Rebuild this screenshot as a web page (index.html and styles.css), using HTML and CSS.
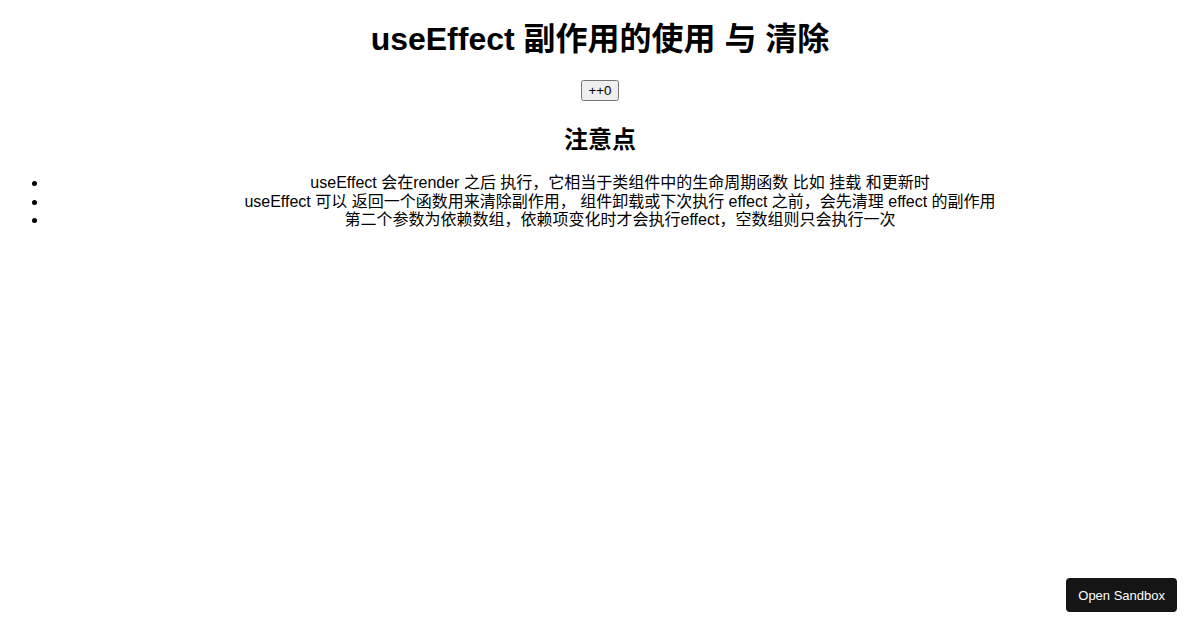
FILE: index.html
```html
<!DOCTYPE html>
<html lang="zh-CN">
<head>
<meta charset="utf-8">
<title>useEffect</title>
<link rel="stylesheet" href="styles.css">
</head>
<body>
<div class="app">
  <h1 class="title">useEffect 副作用的使用 与 清除</h1>
  <button class="counter" type="button">++0</button>
  <h2 class="subtitle">注意点</h2>
  <ul class="notes">
    <li class="note">useEffect 会在render 之后 执行，它相当于类组件中的生命周期函数 比如 挂载 和更新时</li>
    <li class="note">useEffect 可以 返回一个函数用来清除副作用， 组件卸载或下次执行 effect 之前，会先清理 effect 的副作用</li>
    <li class="note">第二个参数为依赖数组，依赖项变化时才会执行effect，空数组则只会执行一次</li>
  </ul>
</div>
<a class="open-sandbox" href="#">Open Sandbox</a>
</body>
</html>
```

FILE: styles.css
```css
body {
  margin: 0;
  padding: 0 8px;
  background: #ffffff;
  color: #000000;
}

.app {
  font-family: "Liberation Sans", Arial, "Noto Sans CJK SC", sans-serif;
  text-align: center;
  line-height: 1.15;
}

.title {
  font-size: 32px;
  line-height: 36.8px;
  height: 36.8px;
  margin: 21.44px 0;
}

.counter {
  font-family: "Liberation Sans", Arial, sans-serif;
  font-size: 13.333px;
  line-height: 15.3px;
  height: 21.5px;
  vertical-align: top;
}

.subtitle {
  font-size: 24px;
  line-height: 27.6px;
  height: 27.6px;
  margin: 25px 0 20.5px;
}

.notes {
  margin: 16px 0;
  padding-left: 40px;
  font-size: 16px;
  line-height: 18.4px;
}

.note {
  height: 18.4px;
}

.open-sandbox {
  position: fixed;
  right: 23px;
  bottom: 18px;
  height: 34px;
  padding: 0 12px;
  display: flex;
  align-items: center;
  background: #151515;
  color: #ffffff;
  border-radius: 4px;
  font-family: "Liberation Sans", Arial, sans-serif;
  font-size: 13px;
  text-decoration: none;
}
```
